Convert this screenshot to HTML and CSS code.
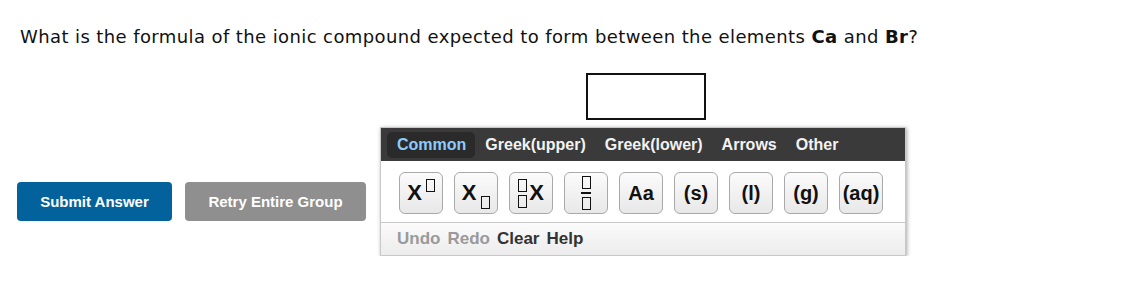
FILE: index.html
```html
<!DOCTYPE html>
<html>
<head>
<meta charset="utf-8">
<link rel="stylesheet" href="styles.css">
</head>
<body>
<div class="page">
  <p class="question">What is the formula of the ionic compound expected to form between the elements <b>Ca</b> and <b>Br</b>?</p>
  <div class="work">
    <div class="actions">
      <button class="btn btn-submit">Submit Answer</button>
      <button class="btn btn-retry">Retry Entire Group</button>
    </div>
    <div class="editor">
      <div class="answer-box"></div>
      <div class="palette">
        <div class="tabs">
          <span class="tab active">Common</span>
          <span class="tab">Greek(upper)</span>
          <span class="tab">Greek(lower)</span>
          <span class="tab">Arrows</span>
          <span class="tab">Other</span>
        </div>
        <div class="keys">
          <div class="key"><span class="x">X</span><span class="ph sup"></span></div>
          <div class="key"><span class="x">X</span><span class="ph sub"></span></div>
          <div class="key"><span class="stack"><span class="ph"></span><span class="ph"></span></span><span class="x">X</span></div>
          <div class="key"><span class="frac"><span class="ph"></span><span class="bar"></span><span class="ph"></span></span></div>
          <div class="key">Aa</div>
          <div class="key">(s)</div>
          <div class="key">(l)</div>
          <div class="key">(g)</div>
          <div class="key">(aq)</div>
        </div>
        <div class="footer">
          <span class="link dim">Undo</span>
          <span class="link dim">Redo</span>
          <span class="link">Clear</span>
          <span class="link">Help</span>
        </div>
      </div>
    </div>
  </div>
</div>
</body>
</html>
```
FILE: styles.css
```css
html, body {
  margin: 0;
  background: #fff;
}
.page {
  padding: 26px 0 0 20px;
}
.question {
  margin: 0;
  font-family: "DejaVu Sans", Verdana, sans-serif;
  font-size: 18px;
  letter-spacing: 0.4px;
  line-height: 22px;
  color: #111;
}
.question b {
  font-weight: bold;
}
.work {
  display: flex;
  margin-top: 25px;
  margin-left: -3px;
}
.actions {
  display: flex;
  gap: 13px;
  margin-top: 109px;
  align-items: flex-start;
}
.btn {
  border: none;
  border-radius: 4px;
  height: 39px;
  color: #fff;
  font-family: "Liberation Sans", Arial, sans-serif;
  font-weight: bold;
  font-size: 15px;
  padding: 0;
}
.btn-submit {
  width: 155px;
  background: #03629b;
}
.btn-retry {
  width: 181px;
  background: #8f8f8f;
}
.editor {
  margin-left: 14px;
  display: flex;
  flex-direction: column;
  align-items: flex-start;
}
.answer-box {
  width: 116px;
  height: 43px;
  border: 2px solid #111;
  margin-left: 206px;
  box-sizing: content-box;
}
.palette {
  margin-top: 7px;
  width: 524px;
  border: 1px solid #c8c8c8;
  box-shadow: 1px 1px 4px rgba(0,0,0,0.35);
  background: #fff;
  font-family: "Liberation Sans", Arial, sans-serif;
  font-weight: bold;
}
.tabs {
  background: #3a3a3a;
  height: 33px;
  display: flex;
  align-items: center;
  padding-left: 6px;
}
.tab {
  color: #f2f2f2;
  font-size: 16px;
  padding: 5px 9px 5px 10px;
  border-radius: 5px;
  line-height: 16px;
}
.tab.active {
  background: #2a2a2a;
  color: #8dcbff;
}
.keys {
  display: flex;
  gap: 11px;
  padding: 11px 0 8px 18px;
  border-bottom: 1px solid #c8c8c8;
}
.key {
  width: 42px;
  height: 40px;
  border: 1px solid #a9a9a9;
  border-radius: 6px;
  background: linear-gradient(#fbfbfb, #e8e8e8);
  display: flex;
  align-items: center;
  justify-content: center;
  font-size: 20px;
  color: #111;
}
.x {
  font-size: 22px;
}
.ph {
  display: inline-block;
  width: 9px;
  height: 13px;
  border: 1px solid #111;
  box-sizing: border-box;
}
.ph.sup {
  align-self: flex-start;
  margin-top: 6px;
  margin-left: 4px;
}
.ph.sub {
  align-self: flex-end;
  margin-bottom: 4px;
  margin-left: 5px;
}
.stack {
  display: flex;
  flex-direction: column;
  gap: 3px;
  margin-right: 2px;
}
.frac {
  display: flex;
  flex-direction: column;
  align-items: center;
  gap: 3px;
}
.frac .bar {
  width: 10px;
  height: 2px;
  background: #111;
}
.footer {
  height: 32px;
  background: linear-gradient(#fbfbfb, #ececec);
  display: flex;
  align-items: center;
  padding-left: 16px;
  gap: 7px;
}
.link {
  font-size: 17px;
  color: #333;
}
.link.dim {
  color: #9a9a9a;
}
```
